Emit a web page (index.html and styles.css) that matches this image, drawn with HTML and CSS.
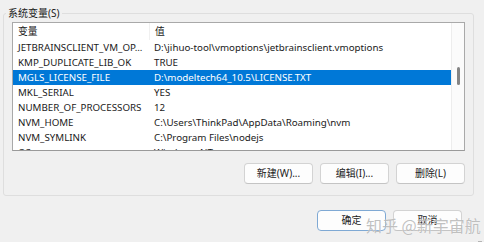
FILE: index.html
```html
<!DOCTYPE html>
<html lang="zh-CN">
<head>
<meta charset="utf-8">
<title>系统变量</title>
<link rel="stylesheet" href="styles.css">
</head>
<body>
<div class="dialog">
  <fieldset class="group">
    <legend class="legend">系统变量(S)</legend>
    <div class="list">
      <div class="table">
        <div class="row header"><span class="c1">变量</span><span class="c2">值</span></div>
        <div class="row"><span class="c1">JETBRAINSCLIENT_VM_OP...</span><span class="c2">D:\jihuo-tool\vmoptions\jetbrainsclient.vmoptions</span></div>
        <div class="row"><span class="c1">KMP_DUPLICATE_LIB_OK</span><span class="c2">TRUE</span></div>
        <div class="row selected"><span class="c1">MGLS_LICENSE_FILE</span><span class="c2">D:\modeltech64_10.5\LICENSE.TXT</span></div>
        <div class="row"><span class="c1">MKL_SERIAL</span><span class="c2">YES</span></div>
        <div class="row"><span class="c1">NUMBER_OF_PROCESSORS</span><span class="c2">12</span></div>
        <div class="row"><span class="c1">NVM_HOME</span><span class="c2">C:\Users\ThinkPad\AppData\Roaming\nvm</span></div>
        <div class="row"><span class="c1">NVM_SYMLINK</span><span class="c2">C:\Program Files\nodejs</span></div>
        <div class="row"><span class="c1">OS</span><span class="c2">Windows_NT</span></div>
      </div>
      <div class="scrollbar"><div class="thumb"></div></div>
    </div>
    <div class="btns">
      <button class="btn">新建(W)...</button>
      <button class="btn">编辑(I)...</button>
      <button class="btn">删除(L)</button>
    </div>
  </fieldset>
  <div class="footer">
    <button class="btn default">确定</button>
    <button class="btn cancel">取消</button>
  </div>
  <div class="watermark">知乎 @新宇宙航</div>
  <div class="grip"></div>
</div>
</body>
</html>
```

FILE: styles.css
```css
html, body {
  margin: 0;
  padding: 0;
  background: #f0f0f0;
}
body {
  width: 484px;
  height: 242px;
  overflow: hidden;
  font-family: "Noto Sans", "Noto Sans CJK SC", sans-serif;
  font-size: 10px;
  color: #1a1a1a;
}
.dialog {
  position: relative;
  width: 484px;
  height: 242px;
}
.group {
  margin: 5px 10px 0 3px;
  padding: 1px 8px 11px 8px;
  border: 1px solid #dedede;
  border-radius: 3px;
  min-width: 0;
}
.legend {
  margin-left: -6px;
  padding: 0 2px;
  height: 16px;
  line-height: 16px;
  font-size: 10px;
}
.list {
  display: flex;
  height: 127px;
  border: 1px solid #a9a9a9;
  border-bottom-color: #9a9a9a;
  background: #fff;
  overflow: hidden;
}
.table {
  flex: 1;
  min-width: 0;
  font-size: 9.75px;
}
.row {
  display: flex;
  height: 15px;
  line-height: 15px;
  white-space: nowrap;
}
.row.header {
  height: 17px;
  line-height: 17px;
}
.header .c1 {
  border-right: 1px solid #f0f0f0;
}
.c1 {
  width: 131px;
  padding-left: 5px;
  flex: none;
  overflow: hidden;
}
.c2 {
  padding-left: 5px;
  flex: 1;
  overflow: hidden;
}
.row.selected {
  background: #0078d7;
  color: #fff;
}
.scrollbar {
  width: 12px;
  flex: none;
  border-left: 1px solid #ededed;
  background: #fbfbfb;
  display: flex;
  justify-content: center;
  padding-top: 44px;
}
.thumb {
  width: 3px;
  height: 18px;
  border-radius: 2px;
  background: #858585;
  margin-left: 1px;
}
.btns {
  display: flex;
  justify-content: flex-end;
  gap: 7px;
  margin-top: 12px;
}
.btn {
  width: 69px;
  height: 21px;
  padding: 0;
  border: 1px solid #d3d3d3;
  border-bottom-color: #c4c4c4;
  border-radius: 4px;
  background: #fdfdfd;
  font-family: "Noto Sans", "Noto Sans CJK SC", sans-serif;
  font-size: 10px;
  color: #1a1a1a;
  line-height: 19px;
}
.footer {
  display: flex;
  justify-content: flex-end;
  gap: 7px;
  margin-top: 14px;
  padding-right: 22px;
}
.btn.default {
  border-color: #7fa9d4;
}
.watermark {
  position: absolute;
  left: 366px;
  top: 210px;
  font-family: "Noto Sans CJK SC", sans-serif;
  font-size: 16px;
  line-height: 20px;
  color: rgba(165, 165, 165, 0.7);
  white-space: nowrap;
  text-shadow: 0 0 1px rgba(255,255,255,0.9);
}
.grip {
  position: absolute;
  right: 2px;
  bottom: 2px;
  width: 4px;
  height: 4px;
  background: radial-gradient(circle, #b0b0b0 0.7px, transparent 0.8px) 0 0 / 2px 2px;
}
```
